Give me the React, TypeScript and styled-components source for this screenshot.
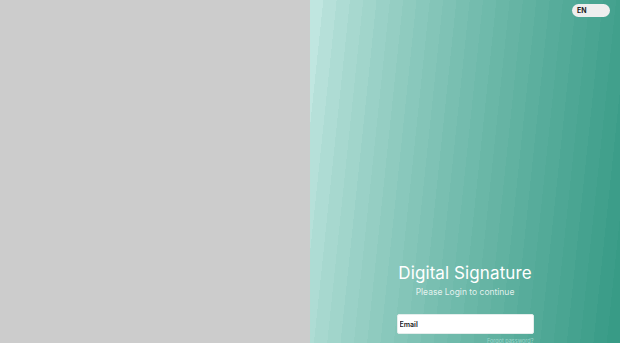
import styled, { createGlobalStyle } from 'styled-components';

const GlobalStyle = createGlobalStyle`
  html, body {
    margin: 0;
    padding: 0;
    width: 100%;
    height: 100%;
    overflow: hidden;
  }
  #root {
    height: 100%;
  }
  * {
    box-sizing: border-box;
  }
`;

// hard-edged stripes, light teal on the left to deep teal on the right
const mix = (a: number[], b: number[], t: number) =>
  a.map((v, i) => Math.round(v + (b[i] - v) * t));

const stripes = (() => {
  const from = [192, 230, 224];
  const to = [56, 155, 134];
  const n = 26;
  const stops: string[] = [];
  for (let i = 0; i < n; i++) {
    const t = Math.pow(i / (n - 1), 0.8);
    const col = `rgb(${mix(from, to, t).join(',')})`;
    stops.push(`${col} ${((i / n) * 100).toFixed(2)}%`);
    stops.push(`${col} ${(((i + 1) / n) * 100).toFixed(2)}%`);
  }
  return `linear-gradient(96deg, ${stops.join(', ')})`;
})();

const App = () => {
  return (
    <Page>
      <GlobalStyle />
      <Blank />
      <Hero>
        <LangToggle>
          <span>EN</span>
        </LangToggle>

        <LoginBox>
          <Title>Digital Signature</Title>
          <Subtitle>Please Login to continue</Subtitle>
          <Field type="email" placeholder="Email" />
          <Forgot>Forgot password?</Forgot>
        </LoginBox>
      </Hero>
    </Page>
  );
};

export default App;

const Page = styled.div`
  display: flex;
  width: 100%;
  height: 100%;
  font-family: Inter, 'Open Sans', sans-serif;
`;

const Blank = styled.div`
  flex: 0 0 310px;
  background-color: #cccccc;
`;

const Hero = styled.div`
  position: relative;
  flex: 1;
  display: flex;
  flex-direction: column;
  align-items: center;
  padding-top: 262px;
  background: ${stripes};
`;

const LangToggle = styled.div`
  position: absolute;
  top: 4px;
  right: 10px;
  width: 38px;
  height: 13px;
  border-radius: 7px;
  background-color: #eeeeee;
  display: flex;
  align-items: center;
  padding-left: 5px;

  span {
    font-size: 7px;
    font-weight: 700;
    color: #222;
    line-height: 1;
  }
`;

const LoginBox = styled.div`
  display: flex;
  flex-direction: column;
  align-items: center;
  width: 137px;
`;

const Title = styled.h1`
  margin: 0;
  font-size: 17px;
  font-weight: 400;
  color: #ffffff;
  line-height: 22px;
  letter-spacing: 0.1px;
  white-space: nowrap;
`;

const Subtitle = styled.p`
  margin: 2px 0 0;
  font-size: 8.5px;
  color: rgba(255, 255, 255, 0.82);
  line-height: 12px;
  white-space: nowrap;
`;

const Field = styled.input`
  margin-top: 16px;
  width: 137px;
  height: 20px;
  border: 1px solid #e4eeec;
  border-radius: 2px;
  background: #ffffff;
  padding: 0 2px;
  font-family: inherit;
  font-size: 7px;
  outline: none;

  &::placeholder {
    color: #222;
    font-weight: 600;
  }
`;

const Forgot = styled.a`
  align-self: flex-end;
  margin-top: 3px;
  font-size: 5.5px;
  color: rgba(200, 240, 232, 0.6);
  line-height: 8px;
`;
